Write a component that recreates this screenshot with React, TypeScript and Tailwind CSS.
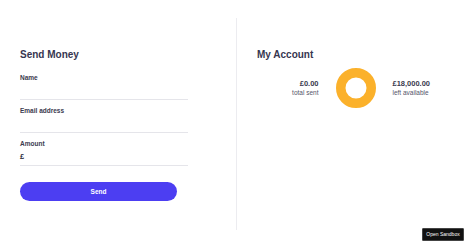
import React from 'react';

function Field({ label, prefix }: { label: string; prefix?: string }) {
  return (
    <div className="mb-[6px]">
      <label className="block h-[10px] text-[6.5px] leading-[10px] font-bold text-[#3a3a4e]">{label}</label>
      <div className="flex h-[17px] items-center border-b border-[#e5e5ea] text-[7.5px] font-bold text-[#2c2c3a]">
        {prefix}
      </div>
    </div>
  );
}

export default function App() {
  return (
    <div
      className="relative h-[248px] w-[474px] overflow-hidden bg-white"
      style={{ fontFamily: '"Liberation Sans", Arial, sans-serif' }}
    >
      <div className="flex h-full py-[18px]">
        {/* Send Money */}
        <div className="w-[237px] border-r border-[#ececf0] pl-[20px] pr-[48px] pt-[30px]">
          <h2 className="mb-[11px] h-[14px] text-[10px] leading-[14px] font-bold text-[#363650]">Send Money</h2>
          <Field label="Name" />
          <Field label="Email address" />
          <Field label="Amount" prefix="£" />
          <button className="mt-[10px] h-[19px] w-[157px] rounded-full bg-[#4c3ef2] text-[6.5px] font-bold text-white">
            Send
          </button>
        </div>

        {/* My Account */}
        <div className="flex-1 pl-[20px] pt-[30px]">
          <h2 className="h-[14px] text-[10px] leading-[14px] font-bold text-[#363650]">My Account</h2>
          <div className="-ml-[20px] mt-[6px] grid grid-cols-[1fr_auto_1fr] items-center gap-x-[17px]">
            <div className="text-right">
              <p className="text-[7.5px] leading-[9px] font-bold text-[#3a3a4e]">£0.00</p>
              <p className="text-[6.5px] leading-[9px] text-[#55556a]">total sent</p>
            </div>
            <svg width="40" height="40" viewBox="0 0 40 40">
              <circle cx="20" cy="20" r="15.25" fill="none" stroke="#fbb12b" strokeWidth="9.5" />
            </svg>
            <div className="text-left">
              <p className="text-[7.5px] leading-[9px] font-bold text-[#3a3a4e]">£18,000.00</p>
              <p className="text-[6.5px] leading-[9px] text-[#55556a]">left available</p>
            </div>
          </div>
        </div>
      </div>

      <button className="absolute left-[422px] top-[228px] h-[13px] w-[42px] rounded-[1px] border border-[#444] bg-[#111] text-[5px] text-white">
        Open Sandbox
      </button>
    </div>
  );
}
